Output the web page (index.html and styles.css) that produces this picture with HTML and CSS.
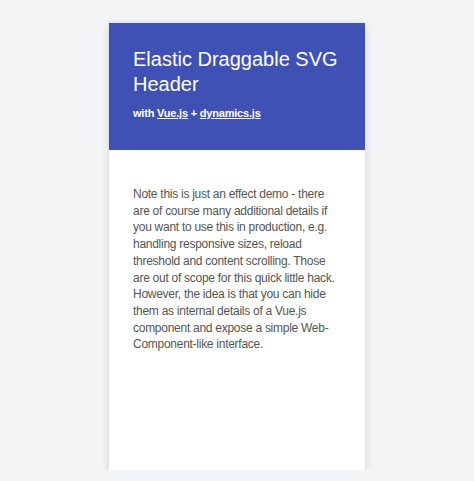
FILE: index.html
```html
<!DOCTYPE html>
<html>
<head>
<meta charset="utf-8">
<link rel="stylesheet" href="styles.css">
</head>
<body>
<div class="card">
  <header class="header">
    <h1 class="title">Elastic Draggable SVG Header</h1>
    <p class="subtitle">with <a href="#">Vue.js</a> + <a href="#">dynamics.js</a></p>
  </header>
  <div class="content">
    <p class="text">Note this is just an effect demo - there are of course many additional details if you want to use this in production, e.g. handling responsive sizes, reload threshold and content scrolling. Those are out of scope for this quick little hack. However, the idea is that you can hide them as internal details of a Vue.js component and expose a simple Web-Component-like interface.</p>
  </div>
</div>
</body>
</html>
```
FILE: styles.css
```css
html, body {
  margin: 0;
  padding: 0;
  background: #f3f4f6;
  font-family: "Liberation Sans", Arial, sans-serif;
}
body {
  display: flex;
  justify-content: center;
  padding-top: 23px;
}
.card {
  width: 256px;
  height: 447px;
  background: #fff;
  box-shadow: 0 2px 8px rgba(0,0,0,0.15);
}
.header {
  background: #3f51b5;
  color: #fff;
  height: 127px;
  box-sizing: border-box;
  padding: 24px 24px 0 24px;
}
.title {
  margin: 0;
  font-size: 20px;
  font-weight: 400;
  line-height: 25px;
}
.subtitle {
  margin: 8px 0 0 0;
  font-size: 11px;
  font-weight: 700;
  line-height: 16px;
  letter-spacing: -0.2px;
}
.subtitle a {
  color: #fff;
}
.content {
  padding: 36px 24px 0 24px;
}
.text {
  margin: 0;
  font-size: 12px;
  line-height: 16.7px;
  letter-spacing: -0.27px;
  color: #555;
}
```
